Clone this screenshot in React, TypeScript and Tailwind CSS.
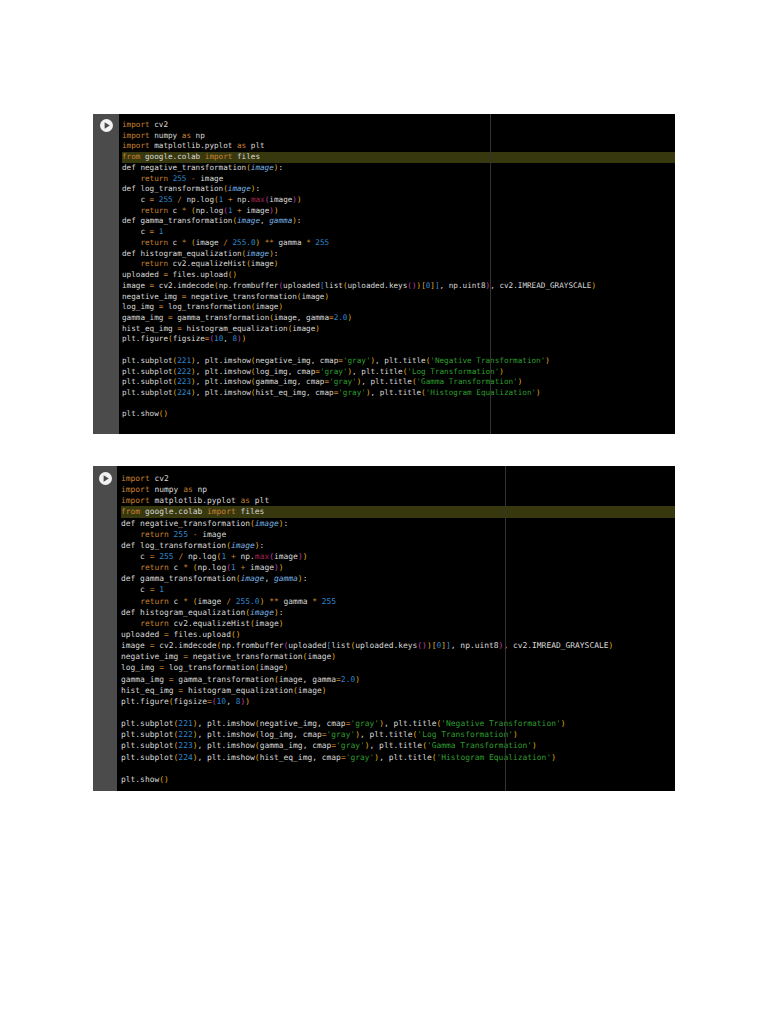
import React from 'react';

const KW = 'text-[#c9812f]';
const NUM = 'text-[#2f86c9]';
const STR = 'text-[#2f9e2f]';
const YEL = 'text-[#e0ad14]';
const PNK = 'text-[#c440b8]';
const BLU = 'text-[#3c8fdc]';
const PAR = 'text-[#79b4e4] italic';
const RED = 'text-[#a8264e]';
const OP = 'text-[#c9812f]';

type Tok = string | [string, string];

const importLine = (mod: string, alias?: string): Tok[] =>
  alias
    ? [['import', KW], ` ${mod} `, ['as', KW], ` ${alias}`]
    : [['import', KW], ` ${mod}`];

const subplot = (n: string, img: string, title: string): Tok[] => [
  'plt.subplot',
  ['(', YEL],
  [n, NUM],
  [')', YEL],
  ', plt.imshow',
  ['(', YEL],
  `${img}, cmap`,
  ['=', OP],
  [`'gray'`, STR],
  [')', YEL],
  ', plt.title',
  ['(', YEL],
  [`'${title}'`, STR],
  [')', YEL],
];

const LINES: Tok[][] = [
  importLine('cv2'),
  importLine('numpy', 'np'),
  importLine('matplotlib.pyplot', 'plt'),
  [['from', KW], ' google.colab ', ['import', KW], ' files'],
  ['def negative_transformation', ['(', YEL], ['image', PAR], [')', YEL], ':'],
  ['    ', ['return', KW], ' ', ['255', NUM], ' ', ['-', OP], ' image'],
  ['def log_transformation', ['(', YEL], ['image', PAR], [')', YEL], ':'],
  ['    c ', ['=', OP], ' ', ['255', NUM], ' ', ['/', OP], ' np.log', ['(', YEL], ['1', NUM], ' ', ['+', OP], ' np.', ['max', RED], ['(', PNK], 'image', [')', PNK], [')', YEL]],
  ['    ', ['return', KW], ' c ', ['*', OP], ' ', ['(', YEL], 'np.log', ['(', PNK], ['1', NUM], ' ', ['+', OP], ' image', [')', PNK], [')', YEL]],
  ['def gamma_transformation', ['(', YEL], ['image', PAR], ', ', ['gamma', PAR], [')', YEL], ':'],
  ['    c ', ['=', OP], ' ', ['1', NUM]],
  ['    ', ['return', KW], ' c ', ['*', OP], ' ', ['(', YEL], 'image ', ['/', OP], ' ', ['255.0', NUM], [')', YEL], ' ', ['**', OP], ' gamma ', ['*', OP], ' ', ['255', NUM]],
  ['def histogram_equalization', ['(', YEL], ['image', PAR], [')', YEL], ':'],
  ['    ', ['return', KW], ' cv2.equalizeHist', ['(', YEL], 'image', [')', YEL]],
  ['uploaded ', ['=', OP], ' files.upload', ['()', YEL]],
  ['image ', ['=', OP], ' cv2.imdecode', ['(', YEL], 'np.frombuffer', ['(', PNK], 'uploaded', ['[', BLU], 'list', ['(', YEL], 'uploaded.keys', ['()', PNK], [')', YEL], ['[', YEL], ['0', NUM], [']', YEL], [']', BLU], ', np.uint8', [')', PNK], ', cv2.IMREAD_GRAYSCALE', [')', YEL]],
  ['negative_img ', ['=', OP], ' negative_transformation', ['(', YEL], 'image', [')', YEL]],
  ['log_img ', ['=', OP], ' log_transformation', ['(', YEL], 'image', [')', YEL]],
  ['gamma_img ', ['=', OP], ' gamma_transformation', ['(', YEL], 'image, gamma', ['=', OP], ['2.0', NUM], [')', YEL]],
  ['hist_eq_img ', ['=', OP], ' histogram_equalization', ['(', YEL], 'image', [')', YEL]],
  ['plt.figure', ['(', YEL], 'figsize', ['=', OP], ['(', PNK], ['10', NUM], ', ', ['8', NUM], [')', PNK], [')', YEL]],
  [],
  subplot('221', 'negative_img', 'Negative Transformation'),
  subplot('222', 'log_img', 'Log Transformation'),
  subplot('223', 'gamma_img', 'Gamma Transformation'),
  subplot('224', 'hist_eq_img', 'Histogram Equalization'),
  [],
  ['plt.show', ['()', YEL]],
];

const PlayIcon = () => (
  <svg width="13" height="13" viewBox="0 0 13 13">
    <circle cx="6.5" cy="6.5" r="6.5" fill="#f2f2f2" />
    <path d="M4.6 3.2 L9.8 6.5 L4.6 9.8 Z" fill="#4a4a4a" />
  </svg>
);

const CodeCell = ({ className, gutter, code, line, ruler }: { className: string; gutter: string; code: string; line: string; ruler: string }) => (
  <div className={`relative flex w-[582px] bg-black ${className}`}>
    <div className={`shrink-0 bg-[#4b4b4b] flex justify-center ${gutter}`}>
      <PlayIcon />
    </div>
    <div className={`flex-1 min-w-0 font-['DejaVu_Sans_Mono',monospace] text-[#d9d9d9] whitespace-pre ${code}`}>
      {LINES.map((toks, i) => (
        <div key={i} className={`${line} ${i === 3 ? 'bg-[#38380f]' : ''}`}>
          {toks.map((t, j) => (typeof t === 'string' ? <span key={j}>{t}</span> : <span key={j} className={t[1]}>{t[0]}</span>))}
        </div>
      ))}
    </div>
    <div className={`absolute top-0 bottom-0 w-px bg-[#333333] ${ruler}`} />
  </div>
);

export default function App() {
  return (
    <div className="min-h-screen bg-white pt-[114px] pl-[93px] flex flex-col gap-[32px]">
      <CodeCell
        className="h-[320px]"
        gutter="w-[26px] pt-[5px]"
        code="pt-[6px] pl-[3px] text-[7.65px]"
        line="h-[10.73px] leading-[10.73px]"
        ruler="left-[397px]"
      />
      <CodeCell
        className="h-[325px]"
        gutter="w-[24px] pt-[6px]"
        code="pt-[7px] pl-[4px] text-[7.95px]"
        line="h-[11.15px] leading-[11.15px]"
        ruler="left-[412px]"
      />
    </div>
  );
}
